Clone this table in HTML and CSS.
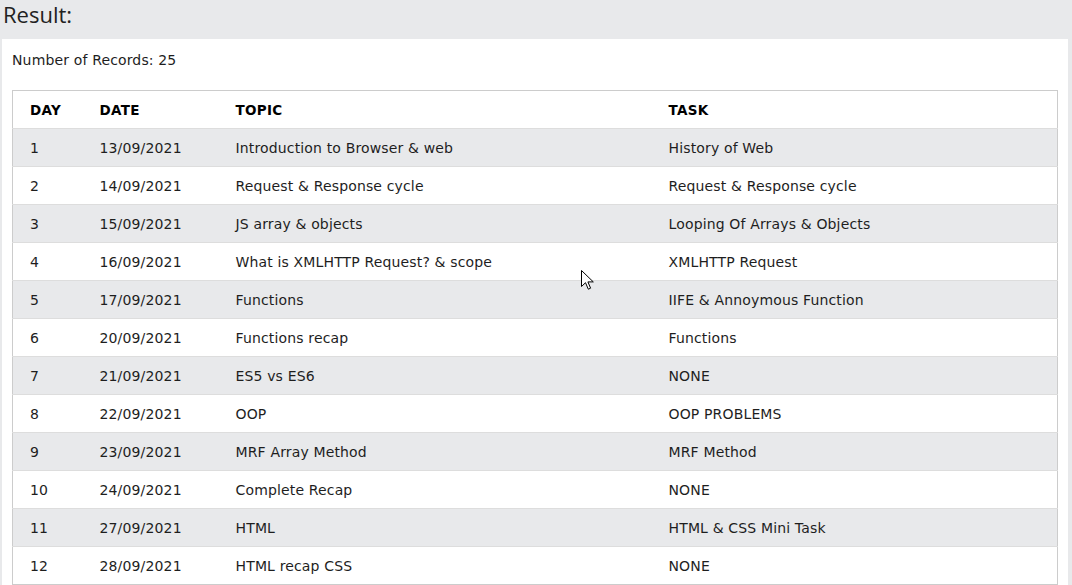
FILE: index.html
```html
<!DOCTYPE html>
<html>
<head>
<meta charset="utf-8">
<link rel="stylesheet" href="styles.css">
</head>
<body>
<div class="page">
  <h2 class="title">Result:</h2>
  <div class="panel">
    <p class="count">Number of Records: 25</p>
    <table class="records">
      <thead>
        <tr><th class="c-day">DAY</th><th class="c-date">DATE</th><th class="c-topic">TOPIC</th><th>TASK</th></tr>
      </thead>
      <tbody>
        <tr><td>1</td><td>13/09/2021</td><td>Introduction to Browser &amp; web</td><td>History of Web</td></tr>
        <tr><td>2</td><td>14/09/2021</td><td>Request &amp; Response cycle</td><td>Request &amp; Response cycle</td></tr>
        <tr><td>3</td><td>15/09/2021</td><td>JS array &amp; objects</td><td>Looping Of Arrays &amp; Objects</td></tr>
        <tr><td>4</td><td>16/09/2021</td><td>What is XMLHTTP Request? &amp; scope</td><td>XMLHTTP Request</td></tr>
        <tr><td>5</td><td>17/09/2021</td><td>Functions</td><td>IIFE &amp; Annoymous Function</td></tr>
        <tr><td>6</td><td>20/09/2021</td><td>Functions recap</td><td>Functions</td></tr>
        <tr><td>7</td><td>21/09/2021</td><td>ES5 vs ES6</td><td>NONE</td></tr>
        <tr><td>8</td><td>22/09/2021</td><td>OOP</td><td>OOP PROBLEMS</td></tr>
        <tr><td>9</td><td>23/09/2021</td><td>MRF Array Method</td><td>MRF Method</td></tr>
        <tr><td>10</td><td>24/09/2021</td><td>Complete Recap</td><td>NONE</td></tr>
        <tr><td>11</td><td>27/09/2021</td><td>HTML</td><td>HTML &amp; CSS Mini Task</td></tr>
        <tr><td>12</td><td>28/09/2021</td><td>HTML recap CSS</td><td>NONE</td></tr>
      </tbody>
    </table>
  </div>
</div>
<svg class="cursor" width="14" height="21" viewBox="0 0 14 21">
  <path d="M0.5 0.5 L0.5 16.5 L4.5 12.7 L7.3 19.2 L9.6 18.2 L6.9 11.9 L12.3 11.9 Z" fill="#fff" stroke="#000" stroke-width="1" stroke-linejoin="miter"/>
</svg>
</body>
</html>
```
FILE: styles.css
```css
html, body {
  margin: 0;
  padding: 0;
  background: #e8e9eb;
  overflow: hidden;
}
.page {
  padding: 0 4px 0 2px;
}
.title {
  margin: 0;
  height: 39px;
  padding: 0 0 0 1px;
  box-sizing: border-box;
  font-family: "Open Sans", "Noto Sans", sans-serif;
  font-weight: 400;
  font-size: 22px;
  line-height: 28px;
  color: #222;
}
.panel {
  background: #fff;
  padding: 10px 10px 20px 10px;
  font-family: "DejaVu Sans", Verdana, sans-serif;
  font-size: 14px;
  letter-spacing: 0.15px;
  color: #1e1e1e;
}
.count {
  margin: 0;
  height: 41px;
  line-height: 22px;
}
.records {
  width: 100%;
  border-collapse: collapse;
  border: 1px solid #cccccc;
}
.records th, .records td {
  text-align: left;
  height: 38px;
  box-sizing: border-box;
  padding: 0 0 0 17px;
  vertical-align: middle;
}
.records th {
  font-weight: bold;
  font-size: 13.5px;
  letter-spacing: 0.3px;
  color: #000;
}
.records td {
  border-top: 1px solid #dddddd;
}
.records tbody tr:nth-child(odd) {
  background: #e8e9eb;
}
.c-day { width: 70px; }
.c-date { width: 136px; }
.c-topic { width: 433px; }
.cursor {
  position: absolute;
  left: 581px;
  top: 270px;
}
```
